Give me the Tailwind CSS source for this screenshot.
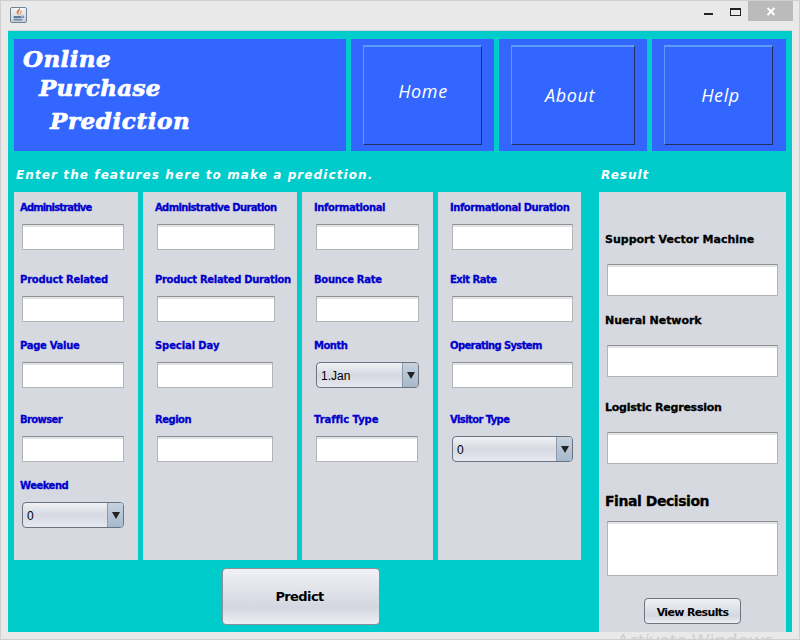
<!doctype html>
<html>
<head>
<meta charset="utf-8">
<script src="https://cdn.jsdelivr.net/npm/@tailwindcss/browser@4"></script>
</head>
<body class="overflow-hidden">
<div class="relative w-[800px] h-[640px] overflow-hidden bg-[#e9e9e9] border border-[#cfcfcf] font-['DejaVu_Sans',sans-serif]">
  <!-- title bar -->
  <div class="flex h-[29px] items-start">
    <div class="ml-[9px] mt-[6px] w-[17px] h-[16px] rounded-[2px] border border-[#6f8397] bg-linear-to-b from-[#f4f6f8] to-[#c5d0da] flex items-center justify-center">
      <svg width="15" height="14" viewBox="0 0 13 13"><path d="M7.5 0C9 2 5.8 3 6.3 5c.2.8 1 1.2 1 1.8C5.5 6 4.3 4.5 5 3 5.5 2 7 1.2 7.5 0Z" fill="#d9662a"/><path d="M9.5 2.5C8 3.5 7.8 4.5 8.4 6" stroke="#e39a55" fill="none"/><path d="M2 7.5h7v2H2zM2 10.5h8v1H2z" fill="#5d7c9b"/><path d="M9.3 7.5h2v1.5h-2" stroke="#5d7c9b" fill="none" stroke-width=".8"/></svg>
    </div>
    <div class="ml-auto flex items-start">
      <div class="w-[9px] h-[2px] mt-[12px] bg-[#222]"></div>
      <div class="w-[11px] h-[8px] mt-[7px] ml-[17px] border border-[#222] border-t-2"></div>
      <div class="w-[45px] h-[20px] ml-[7px] mr-[6px] bg-[#bbbbbb] flex items-center justify-center">
        <svg width="10" height="9" viewBox="0 0 10 9"><path d="M1.5 1 8.5 8M8.5 1 1.5 8" stroke="#fff" stroke-width="2"/></svg>
      </div>
    </div>
  </div>
  <!-- main teal panel -->
  <div class="ml-[7px] w-[784px] h-[602px] border-t border-[#d4d4d4] bg-[#00cccc] pt-[8px] pl-[6px]">
    <!-- header -->
    <div class="flex h-[112px] text-white">
      <div class="w-[332px] bg-[#3366ff] pl-[9px] pt-[5px] font-['DejaVu_Serif',serif] font-bold italic text-[23px] [-webkit-text-stroke:0.7px_white]">
        <div class="leading-[29px] tracking-[0.4px]">Online</div>
        <div class="leading-[29px] pl-[16px] tracking-[0.3px]">Purchase</div>
        <div class="mt-[2px] leading-[33px] pl-[27px] tracking-[0.6px]">Prediction</div>
      </div>
      <div class="ml-[5px] w-[143px] bg-[#3366ff] pt-[6px] pl-[12px]">
        <div class="w-[119px] h-[100px] border border-t-2 border-t-[#5c9cf5] border-l-[#5c9cf5] border-r-[#20305f] border-b-[#20305f] flex items-center justify-center pb-[8px] font-['Open_Sans',sans-serif] italic text-[18px] tracking-[0.6px] pl-[1px]">Home</div>
      </div>
      <div class="ml-[5px] w-[148px] bg-[#3366ff] pt-[6px] pl-[12px]">
        <div class="w-[124px] h-[100px] border border-t-2 border-t-[#5c9cf5] border-l-[#5c9cf5] border-r-[#20305f] border-b-[#20305f] flex items-center justify-center pr-[6px] font-['Open_Sans',sans-serif] italic text-[18px] tracking-[0.6px]">About</div>
      </div>
      <div class="ml-[5px] w-[134px] bg-[#3366ff] pt-[6px] pl-[12px]">
        <div class="w-[109px] h-[100px] border border-t-2 border-t-[#5c9cf5] border-l-[#5c9cf5] border-r-[#20305f] border-b-[#20305f] flex items-center justify-center pl-[4px] font-['Open_Sans',sans-serif] italic text-[18px] tracking-[0.6px]">Help</div>
      </div>
    </div>
    <!-- section titles -->
    <div class="flex h-[41px] items-center pt-[6px] text-white font-['DejaVu_Sans',sans-serif] italic text-[12px] font-semibold">
      <div class="w-[587px] pl-[2px] tracking-[1.1px]">Enter the features here to make a prediction.</div>
      <div class="tracking-[1px]">Result</div>
    </div>
    <!-- columns -->
    <div class="flex items-start text-[#0000cc] font-bold text-[10px] leading-[16px]">
      <div class="flex gap-[5px] flex-col">
        <div class="flex gap-[5px] h-[368px] [-webkit-text-stroke:0.3px_#0000cc]">
          <!-- col 1 -->
          <div class="w-[124px] bg-[#d6d9e0] pt-[8px] grid grid-rows-[72px_66px_74px_66px_66px]">
            <div class="pl-[6px]"><div class="tracking-[-0.85px] mb-[8px]">Administrative</div><div class="ml-[2px] w-[102px] h-[26px] bg-white border border-[#b4b4b4] border-t-[#909090] shadow-[inset_0_2px_0_#e2e3e8]"></div></div>
            <div class="pl-[6px]"><div class="tracking-[-0.2px] mb-[8px]">Product Related</div><div class="ml-[2px] w-[102px] h-[26px] bg-white border border-[#b4b4b4] border-t-[#909090] shadow-[inset_0_2px_0_#e2e3e8]"></div></div>
            <div class="pl-[6px]"><div class="tracking-[-0.3px] mb-[8px]">Page Value</div><div class="ml-[2px] w-[102px] h-[26px] bg-white border border-[#b4b4b4] border-t-[#909090] shadow-[inset_0_2px_0_#e2e3e8]"></div></div>
            <div class="pl-[6px]"><div class="tracking-[-0.6px] mb-[8px]">Browser</div><div class="ml-[2px] w-[102px] h-[26px] bg-white border border-[#b4b4b4] border-t-[#909090] shadow-[inset_0_2px_0_#e2e3e8]"></div></div>
            <div class="pl-[6px]"><div class="tracking-[-0.5px] mb-[8px]">Weekend</div>
              <div class="ml-[2px] w-[102px] h-[26px] flex rounded-[4px] border border-[#6b7280] overflow-hidden bg-linear-to-b from-[#f0f1f5] via-[#d6d9e2] to-[#e6e8ef] [-webkit-text-stroke:0]">
                <div class="flex-1 pl-[4px] font-['Liberation_Sans',sans-serif] font-normal text-[12px] leading-[26px] text-black">0</div>
                <div class="w-[16px] bg-linear-to-b from-[#c6d2de] to-[#a6b9cc] border-l border-[#8b9bab] flex items-center justify-center"><svg width="8" height="7" viewBox="0 0 8 7"><path d="M0 0h8L4 7Z" fill="#222"/></svg></div>
              </div>
            </div>
          </div>
          <!-- col 2 -->
          <div class="w-[154px] bg-[#d6d9e0] pt-[8px] pl-[12px] grid grid-rows-[72px_66px_74px_66px_66px]">
            <div><div class="tracking-[-0.63px] mb-[8px] whitespace-nowrap">Administrative Duration</div><div class="ml-[2px] w-[118px] h-[26px] bg-white border border-[#b4b4b4] border-t-[#909090] shadow-[inset_0_2px_0_#e2e3e8]"></div></div>
            <div><div class="tracking-[-0.33px] mb-[8px] whitespace-nowrap">Product Related Duration</div><div class="ml-[2px] w-[118px] h-[26px] bg-white border border-[#b4b4b4] border-t-[#909090] shadow-[inset_0_2px_0_#e2e3e8]"></div></div>
            <div><div class="tracking-[-0.1px] mb-[8px]">Special Day</div><div class="ml-[2px] w-[116px] h-[26px] bg-white border border-[#b4b4b4] border-t-[#909090] shadow-[inset_0_2px_0_#e2e3e8]"></div></div>
            <div><div class="tracking-[-0.5px] mb-[8px]">Region</div><div class="ml-[2px] w-[116px] h-[26px] bg-white border border-[#b4b4b4] border-t-[#909090] shadow-[inset_0_2px_0_#e2e3e8]"></div></div>
          </div>
          <!-- col 3 -->
          <div class="w-[131px] bg-[#d6d9e0] pt-[8px] pl-[12px] grid grid-rows-[72px_66px_74px_66px_66px]">
            <div><div class="tracking-[-0.42px] mb-[8px]">Informational</div><div class="ml-[2px] w-[103px] h-[26px] bg-white border border-[#b4b4b4] border-t-[#909090] shadow-[inset_0_2px_0_#e2e3e8]"></div></div>
            <div><div class="tracking-[-0.3px] mb-[8px]">Bounce Rate</div><div class="ml-[2px] w-[103px] h-[26px] bg-white border border-[#b4b4b4] border-t-[#909090] shadow-[inset_0_2px_0_#e2e3e8]"></div></div>
            <div><div class="tracking-[-0.5px] mb-[8px]">Month</div>
              <div class="ml-[2px] w-[103px] h-[26px] flex rounded-[4px] border border-[#6b7280] overflow-hidden bg-linear-to-b from-[#f0f1f5] via-[#d6d9e2] to-[#e6e8ef] [-webkit-text-stroke:0]">
                <div class="flex-1 pl-[4px] font-['Liberation_Sans',sans-serif] font-normal text-[12px] leading-[26px] text-black">1.Jan</div>
                <div class="w-[16px] bg-linear-to-b from-[#c6d2de] to-[#a6b9cc] border-l border-[#8b9bab] flex items-center justify-center"><svg width="8" height="7" viewBox="0 0 8 7"><path d="M0 0h8L4 7Z" fill="#222"/></svg></div>
              </div>
            </div>
            <div><div class="tracking-[-0.05px] mb-[8px]">Traffic Type</div><div class="ml-[2px] w-[102px] h-[26px] bg-white border border-[#b4b4b4] border-t-[#909090] shadow-[inset_0_2px_0_#e2e3e8]"></div></div>
          </div>
          <!-- col 4 -->
          <div class="w-[143px] bg-[#d6d9e0] pt-[8px] pl-[12px] grid grid-rows-[72px_66px_74px_66px_66px]">
            <div><div class="tracking-[-0.45px] mb-[8px] whitespace-nowrap">Informational Duration</div><div class="ml-[2px] w-[121px] h-[26px] bg-white border border-[#b4b4b4] border-t-[#909090] shadow-[inset_0_2px_0_#e2e3e8]"></div></div>
            <div><div class="tracking-[-0.5px] mb-[8px]">Exit Rate</div><div class="ml-[2px] w-[121px] h-[26px] bg-white border border-[#b4b4b4] border-t-[#909090] shadow-[inset_0_2px_0_#e2e3e8]"></div></div>
            <div><div class="tracking-[-0.62px] mb-[8px]">Operating System</div><div class="ml-[2px] w-[121px] h-[26px] bg-white border border-[#b4b4b4] border-t-[#909090] shadow-[inset_0_2px_0_#e2e3e8]"></div></div>
            <div><div class="tracking-[-0.6px] mb-[8px]">Visitor Type</div>
              <div class="ml-[2px] w-[121px] h-[26px] flex rounded-[4px] border border-[#6b7280] overflow-hidden bg-linear-to-b from-[#f0f1f5] via-[#d6d9e2] to-[#e6e8ef] [-webkit-text-stroke:0]">
                <div class="flex-1 pl-[4px] font-['Liberation_Sans',sans-serif] font-normal text-[12px] leading-[26px] text-black">0</div>
                <div class="w-[16px] bg-linear-to-b from-[#c6d2de] to-[#a6b9cc] border-l border-[#8b9bab] flex items-center justify-center"><svg width="8" height="7" viewBox="0 0 8 7"><path d="M0 0h8L4 7Z" fill="#222"/></svg></div>
              </div>
            </div>
          </div>
        </div>
        <!-- predict -->
        <div class="pl-[208px] pt-[3px]">
          <div class="w-[158px] h-[57px] rounded-[4px] border border-[#8a8f98] bg-linear-to-b from-[#f0f1f5] via-[#d4d7e0] via-70% to-[#eef0f4] flex items-center justify-center pr-[3px] text-black font-['DejaVu_Sans',sans-serif] font-bold text-[13px] tracking-[-0.6px]">Predict</div>
        </div>
      </div>
      <!-- result -->
      <div class="ml-[18px] w-[187px] h-[440px] bg-[#d6d9e0] text-black [-webkit-text-stroke:0.3px_black]">
        <div class="pl-[6px] pt-[40px] text-[11px] leading-[16px] tracking-[0px] whitespace-nowrap">Support Vector Machine</div>
        <div class="ml-[8px] mt-[16px] w-[171px] h-[32px] bg-white border border-[#b4b4b4] border-t-[#909090] shadow-[inset_0_2px_0_#e2e3e8]"></div>
        <div class="pl-[6px] mt-[17px] text-[11px] leading-[16px] tracking-[-0.05px]">Nueral Network</div>
        <div class="ml-[8px] mt-[16px] w-[171px] h-[32px] bg-white border border-[#b4b4b4] border-t-[#909090] shadow-[inset_0_2px_0_#e2e3e8]"></div>
        <div class="pl-[6px] mt-[23px] text-[11px] leading-[16px] tracking-[-0.23px]">Logistic Regression</div>
        <div class="ml-[8px] mt-[16px] w-[171px] h-[32px] bg-white border border-[#b4b4b4] border-t-[#909090] shadow-[inset_0_2px_0_#e2e3e8]"></div>
        <div class="pl-[6px] mt-[28px] text-[14px] leading-[18px] tracking-[-0.45px]">Final Decision</div>
        <div class="ml-[8px] mt-[11px] w-[171px] h-[55px] bg-white border border-[#b4b4b4] border-t-[#909090] shadow-[inset_0_2px_0_#e2e3e8]"></div>
        <div class="ml-[45px] mt-[22px] w-[97px] h-[26px] rounded-[4px] border border-[#70757d] bg-linear-to-b from-[#f0f1f5] via-[#d4d7e0] via-70% to-[#eef0f4] flex items-center justify-center pt-[3px] font-bold text-[11px] tracking-[-0.65px] [-webkit-text-stroke:0]">View Results</div>
      </div>
    </div>
  </div>
  <!-- watermark -->
  <div class="absolute left-[616px] top-[626px] font-['Open_Sans',sans-serif] text-[19px] leading-[27px] text-[#cfcfcf] whitespace-nowrap">Activate Windows</div>
</div>
</body>
</html>
